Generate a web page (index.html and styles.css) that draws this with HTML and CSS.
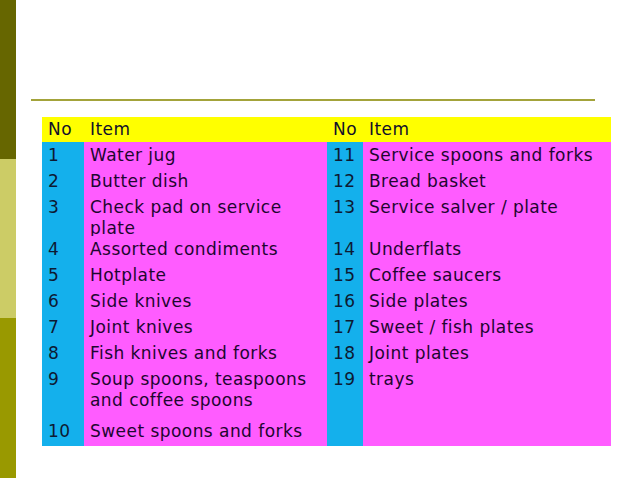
FILE: index.html
```html
<!DOCTYPE html>
<html>
<head>
<meta charset="utf-8">
<link rel="stylesheet" href="styles.css">
</head>
<body>
<div class="slide">
  <div class="sidebar">
    <div class="band band-dark"></div>
    <div class="band band-light"></div>
    <div class="band band-mid"></div>
  </div>
  <div class="main">
    <div class="rule"></div>
    <div class="table">
      <div class="cell head">No</div><div class="cell head">Item</div><div class="cell head">No</div><div class="cell head">Item</div>

      <div class="cell num">1</div><div class="cell item">Water jug</div><div class="cell num">11</div><div class="cell item">Service spoons and forks</div>
      <div class="cell num">2</div><div class="cell item">Butter dish</div><div class="cell num">12</div><div class="cell item">Bread basket</div>
      <div class="cell num">3</div><div class="cell item">Check pad on service plate</div><div class="cell num">13</div><div class="cell item">Service salver / plate</div>
      <div class="cell num">4</div><div class="cell item">Assorted condiments</div><div class="cell num">14</div><div class="cell item">Underflats</div>
      <div class="cell num">5</div><div class="cell item">Hotplate</div><div class="cell num">15</div><div class="cell item">Coffee saucers</div>
      <div class="cell num">6</div><div class="cell item">Side knives</div><div class="cell num">16</div><div class="cell item">Side plates</div>
      <div class="cell num">7</div><div class="cell item">Joint knives</div><div class="cell num">17</div><div class="cell item">Sweet / fish plates</div>
      <div class="cell num">8</div><div class="cell item">Fish knives and forks</div><div class="cell num">18</div><div class="cell item">Joint plates</div>
      <div class="cell num">9</div><div class="cell item">Soup spoons, teaspoons and coffee spoons</div><div class="cell num">19</div><div class="cell item">trays</div>
      <div class="cell num">10</div><div class="cell item">Sweet spoons and forks</div><div class="cell num"></div><div class="cell item"></div>
    </div>
  </div>
</div>
</body>
</html>
```
FILE: styles.css
```css
html, body {
  margin: 0;
  padding: 0;
  background: #ffffff;
}
body {
  width: 638px;
  height: 478px;
  overflow: hidden;
  font-family: "DejaVu Sans", Verdana, sans-serif;
}
.slide {
  display: flex;
  width: 638px;
  height: 478px;
}
.sidebar {
  width: 16px;
  display: flex;
  flex-direction: column;
  flex-shrink: 0;
}
.band { height: 159px; }
.band-dark { background: #666600; }
.band-light { background: #cccc66; }
.band-mid { background: #999900; height: 160px; }
.main {
  flex: 1;
  padding-top: 99px;
}
.rule {
  margin-left: 15px;
  width: 564px;
  height: 2px;
  background: #a3a33a;
}
.table {
  margin-top: 16px;
  margin-left: 26px;
  display: grid;
  grid-template-columns: 42px 243px 36px 248px;
  grid-template-rows: 25px 26px 26px 42px 26px 26px 26px 26px 26px 52px 28px;
  font-size: 17px;
  letter-spacing: 0.45px;
  line-height: 21px;
  color: #1e0630;
}
.cell {
  padding: 3px 2px 0 6px;
  white-space: normal;
}
.head {
  background: #ffff00;
  padding-top: 2px;
  color: #12102a;
}
.num {
  background: #14b0ec;
  color: #0d1a33;
}
.item {
  background: #ff5cff;
}
```
